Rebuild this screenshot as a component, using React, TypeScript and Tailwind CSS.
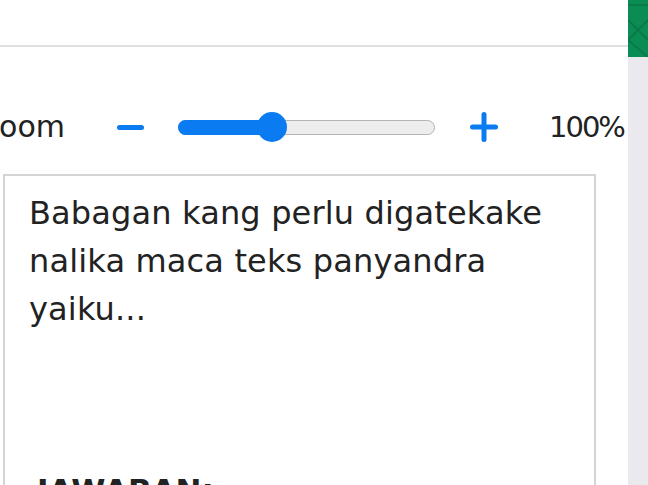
import React from "react";

export default function App() {
  const blue = "bg-[#0b7bf2]";
  return (
    <div className="w-[648px] h-[485px] flex overflow-hidden bg-white text-[#222]" style={{ fontFamily: "'DejaVu Sans', sans-serif" }}>
      <div className="w-[628px] flex flex-col">
        <div className="h-[47px] shrink-0 border-b-2 border-[#e0e0e0]" />
        <div className="mt-[52px] h-[56px] flex items-center shrink-0">
          <div className="w-[65px] flex justify-end whitespace-nowrap text-[30px] leading-none">Zoom</div>
          <div className={`ml-[52px] w-[27px] h-[5px] rounded-full ${blue}`} />
          <div className="ml-[34px] w-[257px] h-[15px] relative rounded-full border border-[#b3b3b3] bg-[#ededed]">
            <div className={`absolute left-[-1px] top-[-1px] h-[15px] w-[95px] rounded-full ${blue}`} />
            <div className={`absolute left-[78px] top-[-8.5px] w-[30px] h-[30px] rounded-full ${blue}`} />
          </div>
          <svg className="ml-[35px]" width="28" height="30" viewBox="0 0 28 30">
            <line x1="2.5" y1="15" x2="25.5" y2="15" stroke="#0b7bf2" strokeWidth="5" strokeLinecap="round" />
            <line x1="14" y1="2.5" x2="14" y2="27.5" stroke="#0b7bf2" strokeWidth="5" strokeLinecap="round" />
          </svg>
          <div className="ml-[51px] text-[29px] leading-none whitespace-nowrap tracking-[-2px]">100%</div>
        </div>
        <div className="mt-[19px] ml-[3px] w-[593px] flex-1 min-h-0 overflow-hidden border-2 border-b-0 border-[#d4d4d4] pl-[24px] pt-[13px]">
          <p className="text-[32px] leading-[48px] tracking-[0.15px] w-[530px]">Babagan kang perlu digatekake nalika maca teks panyandra yaiku...</p>
          <p className="mt-[133px] ml-[8px] text-[31px] font-bold leading-[48px] whitespace-nowrap">JAWABAN:</p>
        </div>
      </div>
      <div className="w-[20px] bg-[#e9e9ee] flex flex-col">
        <div className="h-[57px] bg-[#0c8c55] relative overflow-hidden">
          <svg width="20" height="57" className="absolute inset-0">
            <path d="M0 20 L20 40 M20 20 L0 40 M0 40 L20 57 M0 5 L20 5" stroke="#0a7a49" strokeWidth="2" fill="none" />
          </svg>
        </div>
      </div>
    </div>
  );
}
